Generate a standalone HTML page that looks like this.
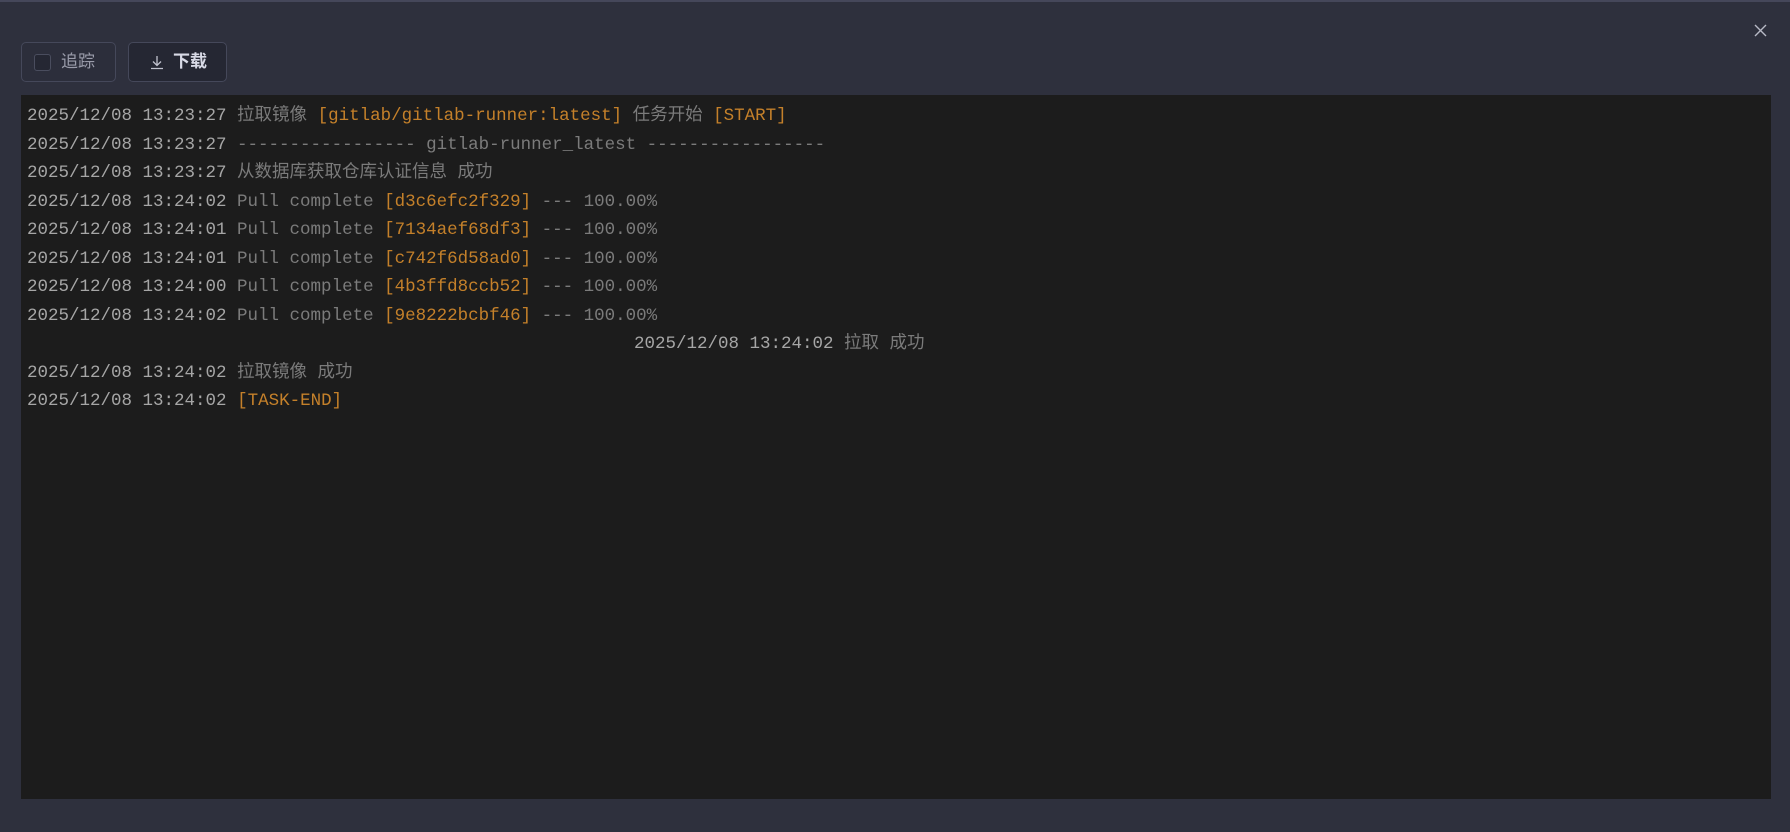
<!DOCTYPE html>
<html><head><meta charset="utf-8"><style>
*{margin:0;padding:0;box-sizing:border-box}
body{width:1790px;height:832px;background:#2e303d;position:relative;overflow:hidden;font-family:"Liberation Sans","Noto Sans CJK SC",sans-serif}
.top{position:absolute;left:0;top:0;width:1790px;height:2px;background:#45475a}
.btn{position:absolute;top:42px;height:40px;border:1px solid #45485a;border-radius:5px;font-size:17px;line-height:38px;color:#9a9caa}
.b1{left:21px;width:95px;background:#2c2e3b}
.b2{left:128px;width:99px;background:#252733;color:#d8dae6;font-weight:bold}
.cb{position:absolute;left:12px;top:11px;width:17px;height:17px;border:1px solid #4a4d5e;border-radius:3px;background:#252733}
.log{position:absolute;left:21px;top:95px;width:1750px;height:704px;background:#1c1c1c}
.l{position:absolute;left:6px;height:28px;line-height:28px;font-family:"Liberation Mono","Noto Sans CJK SC",monospace;font-size:17.5px;color:#7b7b7b;white-space:pre}
.t{color:#a6a6a6}.o{color:#c4802a}
</style></head><body>
<div class="top"></div>
<svg style="position:absolute;left:1754px;top:24px" width="13" height="13" viewBox="0 0 13 13"><path d="M1 1L12 12M12 1L1 12" stroke="#b8bac6" stroke-width="1.4"/></svg>
<div class="btn b1"><div class="cb"></div><span style="position:absolute;left:39px">追踪</span></div>
<div class="btn b2"><svg style="position:absolute;left:21px;top:12px" width="14" height="15" viewBox="0 0 14 15"><path d="M7 1V10M3 6.5L7 10.5L11 6.5M1 13.5H13" stroke="#c0c2ce" stroke-width="1.3" fill="none"/></svg><span style="position:absolute;left:44px">下载</span></div>
<div class="log">
<div class="l" style="top:7px"><span class="t">2025/12/08 13:23:27</span> 拉取镜像 <span class="o">[gitlab/gitlab-runner:latest]</span> 任务开始 <span class="o">[START]</span></div>
<div class="l" style="top:35.5px"><span class="t">2025/12/08 13:23:27</span> ----------------- gitlab-runner_latest -----------------</div>
<div class="l" style="top:64px"><span class="t">2025/12/08 13:23:27</span> 从数据库获取仓库认证信息 成功</div>
<div class="l" style="top:92.5px"><span class="t">2025/12/08 13:24:02</span> Pull complete <span class="o">[d3c6efc2f329]</span> --- 100.00%</div>
<div class="l" style="top:121px"><span class="t">2025/12/08 13:24:01</span> Pull complete <span class="o">[7134aef68df3]</span> --- 100.00%</div>
<div class="l" style="top:149.5px"><span class="t">2025/12/08 13:24:01</span> Pull complete <span class="o">[c742f6d58ad0]</span> --- 100.00%</div>
<div class="l" style="top:178px"><span class="t">2025/12/08 13:24:00</span> Pull complete <span class="o">[4b3ffd8ccb52]</span> --- 100.00%</div>
<div class="l" style="top:206.5px"><span class="t">2025/12/08 13:24:02</span> Pull complete <span class="o">[9e8222bcbf46]</span> --- 100.00%</div>
<div class="l" style="top:235px;left:613px"><span class="t">2025/12/08 13:24:02</span> 拉取 成功</div>
<div class="l" style="top:263.5px"><span class="t">2025/12/08 13:24:02</span> 拉取镜像 成功</div>
<div class="l" style="top:292px"><span class="t">2025/12/08 13:24:02</span> <span class="o">[TASK-END]</span></div>
</div>
</body></html>
